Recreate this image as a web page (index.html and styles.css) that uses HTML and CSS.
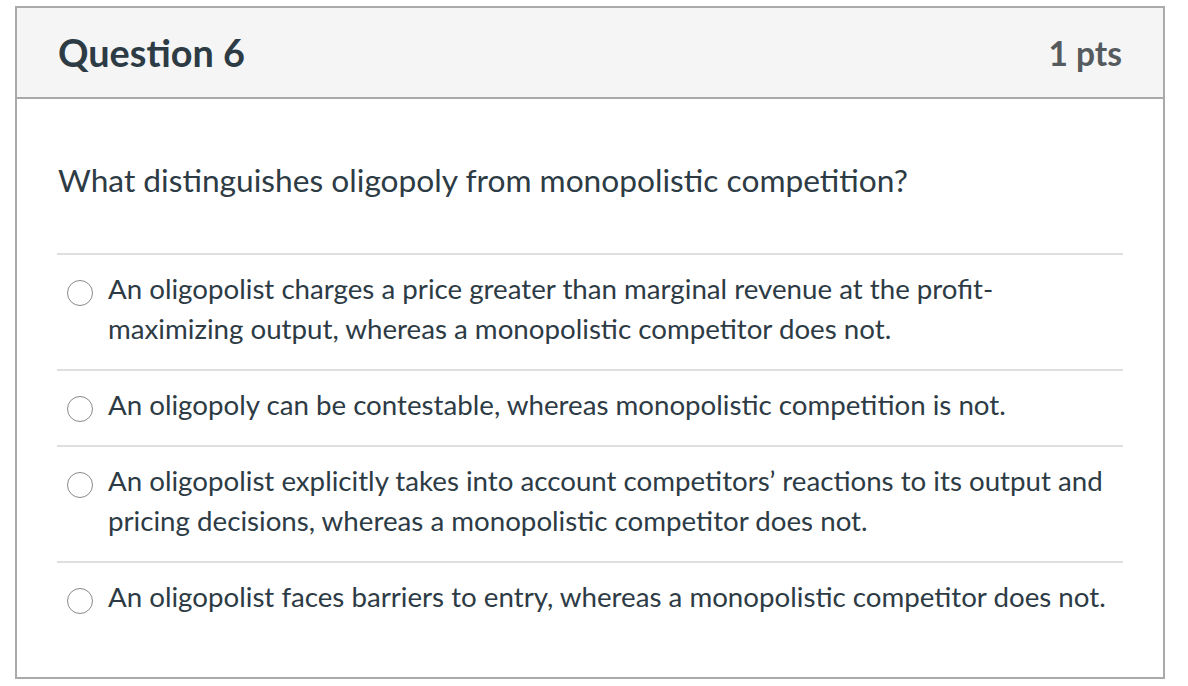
FILE: index.html
```html
<!DOCTYPE html>
<html>
<head>
<meta charset="utf-8">
<link rel="stylesheet" href="styles.css">
</head>
<body>
<div class="card">
  <div class="card-header">
    <h2 class="title">Question 6</h2>
    <div class="points">1 pts</div>
  </div>
  <div class="card-body">
    <p class="question">What distinguishes oligopoly from monopolistic competition?</p>
    <div class="answers">
      <label class="answer"><span class="radio"></span><span class="answer-text">An oligopolist charges a price greater than marginal revenue at the profit-maximizing output, whereas a monopolistic competitor does not.</span></label>
      <label class="answer"><span class="radio"></span><span class="answer-text">An oligopoly can be contestable, whereas monopolistic competition is not.</span></label>
      <label class="answer"><span class="radio"></span><span class="answer-text">An oligopolist explicitly takes into account competitors’ reactions to its output and pricing decisions, whereas a monopolistic competitor does not.</span></label>
      <label class="answer"><span class="radio"></span><span class="answer-text">An oligopolist faces barriers to entry, whereas a monopolistic competitor does not.</span></label>
    </div>
  </div>
</div>
</body>
</html>
```
FILE: styles.css
```css
html, body {
  margin: 0;
  padding: 0;
  background: #ffffff;
}
body {
  font-family: Lato, "Liberation Sans", sans-serif;
  color: #2d3b45;
  padding: 6px 0 0 15px;
}
.card {
  width: 1146px;
  height: 669px;
  border: 2px solid #aaaaaa;
  display: flex;
  flex-direction: column;
}
.card-header {
  height: 89px;
  background: #f5f5f5;
  border-bottom: 2px solid #aaaaaa;
  display: flex;
  align-items: center;
  justify-content: space-between;
  padding: 0 41px 0 41px;
}
.title {
  margin: 0;
  font-size: 37.8px;
  font-weight: 700;
  color: #2d3b45;
}
.points {
  font-size: 33.5px;
  font-weight: 700;
  color: #555a5e;
}
.card-body {
  padding: 0 40px 0 40px;
}
.question {
  margin: 0;
  padding: 61px 0 53px 1px;
  font-size: 31.7px;
  line-height: 40px;
}
.answers {
  display: flex;
  flex-direction: column;
}
.answer {
  display: flex;
  align-items: flex-start;
  gap: 15px;
  padding: 14px 0 20px 10px;
  border-top: 2px solid #dedede;
  font-size: 27.7px;
  line-height: 40px;
}
.radio {
  flex: none;
  width: 24px;
  height: 24px;
  border: 1.5px solid #8a8a8a;
  border-radius: 50%;
  margin-top: 11px;
  background: #fff;
}
.answer-text {
  flex: 1;
}
```
